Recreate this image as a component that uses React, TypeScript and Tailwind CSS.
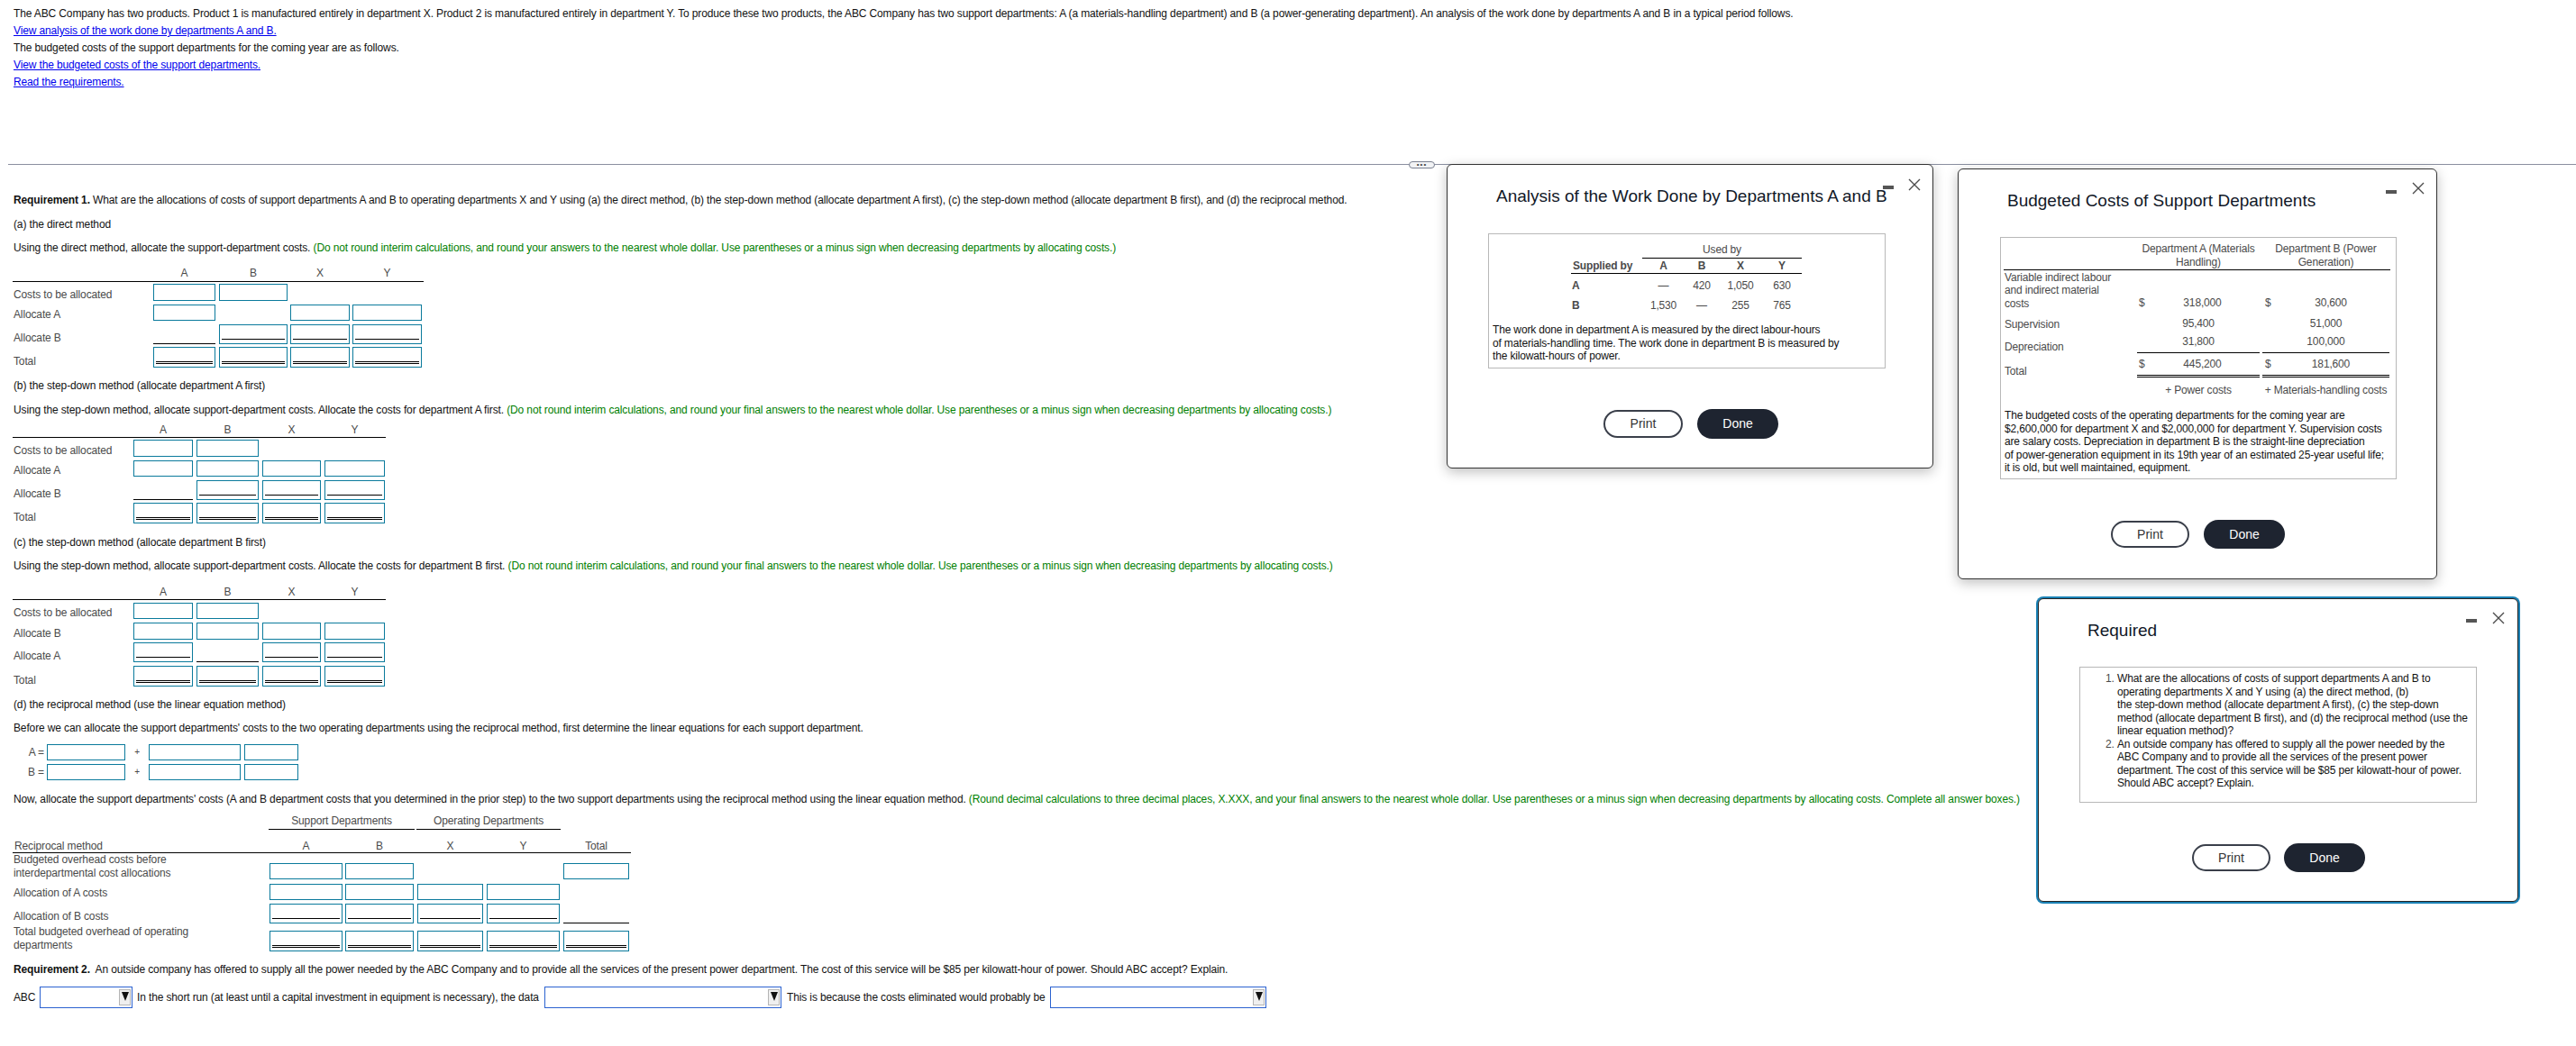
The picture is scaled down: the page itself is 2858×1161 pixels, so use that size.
import type { ReactNode } from 'react';

type CellKind = 'box' | 'single' | 'double' | 'line' | null;

interface TableRow {
  label: ReactNode;
  cells: CellKind[];
  height: string;
  gap: string;
}

const FONT = "font-['Liberation_Sans',Arial,sans-serif]";

function Cell({ kind, width }: { kind: CellKind; width: string }) {
  if (kind === null) return <div className={width} />;
  if (kind === 'line') return <div className={`${width} h-[19px] border-b border-black`} />;
  return (
    <div className={`${width} h-full border border-[#0a7a9c] bg-white ${kind === 'box' ? '' : 'px-[2px]'} ${kind === 'single' ? 'pb-[4px]' : ''} ${kind === 'double' ? 'pb-[3px]' : ''}`}>
      {kind === 'single' && <div className="h-full border-b border-black" />}
      {kind === 'double' && <div className="h-full border-b-[3px] border-double border-black" />}
    </div>
  );
}

function AllocTable(props: {
  grid: string;
  tableWidth: string;
  widths: string[];
  rows: TableRow[];
  headerClass: string;
  first: string;
}) {
  const { grid, tableWidth, widths, rows, headerClass, first } = props;
  return (
    <div className={`${tableWidth} text-[#4a4a4a]`}>
      <div className={`grid ${grid} border-b border-black ${headerClass}`}>
        <div />
        {['A', 'B', 'X', 'Y'].map((h, i) => (
          <div key={h} className={`${widths[i]} text-center leading-[14px]`}>{h}</div>
        ))}
      </div>
      <div className={first}>
        {rows.map((row, r) => (
          <div key={r} className={`grid ${grid} items-end ${row.height} ${row.gap}`}>
            <div className="pl-[1px] leading-[14px]">{row.label}</div>
            {row.cells.map((c, i) => (
              <div key={i} className="flex h-full items-end">
                <Cell kind={c} width={widths[i]} />
              </div>
            ))}
          </div>
        ))}
      </div>
    </div>
  );
}

function SelectBox({ width }: { width: string }) {
  return (
    <div className={`${width} flex h-[24px] shrink-0 items-center justify-end border border-[#2b62d0] bg-white pr-[1px]`}>
      <div className="flex h-[18px] w-[13px] items-start justify-center border border-[#b5b5b5] bg-[#efefef] pt-[2px]">
        <svg width="8" height="10" viewBox="0 0 8 10"><polygon points="0,0 8,0 4,10" fill="#111" /></svg>
      </div>
    </div>
  );
}

function WindowIcons({ minClass, closeClass }: { minClass: string; closeClass: string }) {
  return (
    <>
      <div className={`absolute h-[4px] w-[12px] bg-[#555] ${minClass}`} />
      <svg className={`absolute ${closeClass}`} width="14" height="14" viewBox="0 0 14 14">
        <path d="M1 1 L13 13 M13 1 L1 13" stroke="#4b4b4b" strokeWidth="1.4" fill="none" />
      </svg>
    </>
  );
}

function Buttons({ margin, printClass, doneClass, gap }: { margin: string; printClass: string; doneClass: string; gap: string }) {
  return (
    <div className={`flex items-center tracking-normal ${margin} ${gap}`}>
      <button className={`${printClass} rounded-full border-2 border-[#3a3f4a] bg-white text-[14px] text-[#333]`}>Print</button>
      <button className={`${doneClass} rounded-full bg-[#1e2430] text-[14px] text-white`}>Done</button>
    </div>
  );
}

const gridA = 'grid-cols-[156px_73px_79px_69px_79px]';
const widthsA = ['w-[69px]', 'w-[76px]', 'w-[66px]', 'w-[77px]'];
const gridB = 'grid-cols-[134px_70px_73px_69px_68px]';
const widthsB = ['w-[66px]', 'w-[69px]', 'w-[65px]', 'w-[67px]'];

const GREEN = 'text-[#008000]';

export default function App() {
  return (
    <div className={`relative h-[1161px] w-[2858px] overflow-hidden bg-white text-[12px] tracking-[-0.13px] text-[#111] ${FONT}`}>
      <div className="pl-[15px] pt-[6px] leading-[19px]">
        <p>The ABC Company has two products. Product 1 is manufactured entirely in department X. Product 2 is manufactured entirely in department Y. To produce these two products, the ABC Company has two support departments: A (a materials-handling department) and B (a power-generating department). An analysis of the work done by departments A and B in a typical period follows.</p>
        <p><a className="text-[#0000ee] underline">View analysis of the work done by departments A and B.</a></p>
        <p>The budgeted costs of the support departments for the coming year are as follows.</p>
        <p><a className="text-[#0000ee] underline">View the budgeted costs of the support departments.</a></p>
        <p><a className="text-[#0000ee] underline">Read the requirements.</a></p>
      </div>

      <div className="relative ml-[9px] mt-[81px] h-px bg-[#8a8fa0]">
        <div className="absolute left-[1554px] top-[-3px] flex h-[8px] w-[29px] items-center justify-center rounded-full border border-[#7a8090] bg-[#f2f3f5] text-[8px] leading-[4px] tracking-[1px] text-[#444]">•••</div>
      </div>

      <div className="pl-[14px] leading-[14px]">
        <p className="mt-[32px] pl-[1px]"><b>Requirement 1.</b> What are the allocations of costs of support departments A and B to operating departments X and Y using (a) the direct method, (b) the step-down method (allocate department A first), (c) the step-down method (allocate department B first), and (d) the reciprocal method.</p>
        <p className="mt-[13px] pl-[1px]">(a) the direct method</p>
        <p className="mb-[14px] mt-[12px] pl-[1px]">Using the direct method, allocate the support-department costs. <span className={GREEN}>(Do not round interim calculations, and round your answers to the nearest whole dollar. Use parentheses or a minus sign when decreasing departments by allocating costs.)</span></p>

        <AllocTable
          grid={gridA}
          tableWidth="w-[456px]"
          widths={widthsA}
          headerClass="pb-[2px]"
          first="mt-[2px]"
          rows={[
            { label: 'Costs to be allocated', cells: ['box', 'box', null, null], height: 'h-[19px]', gap: '' },
            { label: 'Allocate A', cells: ['box', null, 'box', 'box'], height: 'h-[18px]', gap: 'mt-[4px]' },
            { label: 'Allocate B', cells: ['line', 'single', 'single', 'single'], height: 'h-[22px]', gap: 'mt-[4px]' },
            { label: 'Total', cells: ['double', 'double', 'double', 'double'], height: 'h-[23px]', gap: 'mt-[3px]' },
          ]}
        />

        <p className="mt-[13px] pl-[1px]">(b) the step-down method (allocate department A first)</p>
        <p className="mb-[8px] mt-[13px] pl-[1px]">Using the step-down method, allocate support-department costs. Allocate the costs for department A first. <span className={GREEN}>(Do not round interim calculations, and round your final answers to the nearest whole dollar. Use parentheses or a minus sign when decreasing departments by allocating costs.)</span></p>

        <AllocTable
          grid={gridB}
          tableWidth="w-[414px]"
          widths={widthsB}
          headerClass="pb-[1px]"
          first="mt-[2px]"
          rows={[
            { label: 'Costs to be allocated', cells: ['box', 'box', null, null], height: 'h-[19px]', gap: '' },
            { label: 'Allocate A', cells: ['box', 'box', 'box', 'box'], height: 'h-[18px]', gap: 'mt-[4px]' },
            { label: 'Allocate B', cells: ['line', 'single', 'single', 'single'], height: 'h-[22px]', gap: 'mt-[4px]' },
            { label: 'Total', cells: ['double', 'double', 'double', 'double'], height: 'h-[23px]', gap: 'mt-[3px]' },
          ]}
        />

        <p className="mt-[14px] pl-[1px]">(c) the step-down method (allocate department B first)</p>
        <p className="mb-[15px] mt-[12px] pl-[1px]">Using the step-down method, allocate support-department costs. Allocate the costs for department B first. <span className={GREEN}>(Do not round interim calculations, and round your final answers to the nearest whole dollar. Use parentheses or a minus sign when decreasing departments by allocating costs.)</span></p>

        <AllocTable
          grid={gridB}
          tableWidth="w-[414px]"
          widths={widthsB}
          headerClass="pb-[1px]"
          first="mt-[3px]"
          rows={[
            { label: 'Costs to be allocated', cells: ['box', 'box', null, null], height: 'h-[18px]', gap: '' },
            { label: 'Allocate B', cells: ['box', 'box', 'box', 'box'], height: 'h-[19px]', gap: 'mt-[4px]' },
            { label: 'Allocate A', cells: ['single', 'line', 'single', 'single'], height: 'h-[22px]', gap: 'mt-[3px]' },
            { label: 'Total', cells: ['double', 'double', 'double', 'double'], height: 'h-[23px]', gap: 'mt-[4px]' },
          ]}
        />

        <p className="mt-[13px] pl-[1px]">(d) the reciprocal method (use the linear equation method)</p>
        <p className="mt-[12px] pl-[1px]">Before we can allocate the support departments' costs to the two operating departments using the reciprocal method, first determine the linear equations for each support department.</p>

        <div className="mt-[11px] text-[#4a4a4a]">
          {['A =', 'B ='].map((name, i) => (
            <div key={name} className={`flex h-[18px] items-center ${i === 1 ? 'mt-[4px]' : ''}`}>
              <span className="w-[36px] pr-[1px] text-right">{name}</span>
              <div className="ml-[2px] h-full w-[87px] border border-[#0a7a9c]" />
              <span className="w-[26px] text-center text-[10px]">+</span>
              <div className="h-full w-[102px] border border-[#0a7a9c]" />
              <div className="ml-[4px] h-full w-[60px] border border-[#0a7a9c]" />
            </div>
          ))}
        </div>

        <p className="mt-[14px] pl-[1px]">Now, allocate the support departments' costs (A and B department costs that you determined in the prior step) to the two support departments using the reciprocal method using the linear equation method. <span className={GREEN}>(Round decimal calculations to three decimal places, X.XXX, and your final answers to the nearest whole dollar. Use parentheses or a minus sign when decreasing departments by allocating costs. Complete all answer boxes.)</span></p>

        {/* Reciprocal method table */}
        <div className="mt-[10px] flex pl-[284px] text-[#4a4a4a]">
          <div className="w-[162px] border-b border-black pb-[2px] text-center">Support Departments</div>
          <div className="ml-[2px] w-[160px] border-b border-black pb-[2px] text-center">Operating Departments</div>
        </div>
        <div className="w-[686px] text-[#4a4a4a]">
          <div className="mt-[11px] grid grid-cols-[285px_84px_80px_77px_85px_75px] border-b border-black">
            <div className="pl-[2px]">Reciprocal method</div>
            <div className="w-[81px] text-center">A</div>
            <div className="w-[76px] text-center">B</div>
            <div className="w-[73px] text-center">X</div>
            <div className="w-[81px] text-center">Y</div>
            <div className="w-[73px] text-center">Total</div>
          </div>
          {[
            { label: <>Budgeted overhead costs before<br />interdepartmental cost allocations</>, cells: ['box', 'box', null, null, 'box'], h: 'h-[30px]', gap: '', inner: 'h-[18px] mb-[1px]' },
            { label: 'Allocation of A costs', cells: ['box', 'box', 'box', 'box', null], h: 'h-[18px]', gap: 'mt-[4px]', inner: 'h-[18px]' },
            { label: 'Allocation of B costs', cells: ['single', 'single', 'single', 'single', 'line'], h: 'h-[22px]', gap: 'mt-[4px]', inner: 'h-[22px]' },
            { label: <>Total budgeted overhead of operating<br />departments</>, cells: ['double', 'double', 'double', 'double', 'double'], h: 'h-[29px]', gap: 'mt-[2px]', inner: 'h-[23px] mb-[1px]' },
          ].map((row, r) => (
            <div key={r} className={`grid grid-cols-[285px_84px_80px_77px_85px_75px] items-end ${row.h} ${row.gap}`}>
              <div className="pl-[1px] leading-[15px]">{row.label}</div>
              {row.cells.map((c, i) => (
                <div key={i} className={`flex items-end ${row.inner}`}>
                  <Cell kind={c as CellKind} width={['w-[81px]', 'w-[76px]', 'w-[73px]', 'w-[81px]', 'w-[73px]'][i]} />
                </div>
              ))}
            </div>
          ))}
        </div>

        <p className="mt-[13px] pl-[1px]"><b>Requirement 2.</b>&nbsp; An outside company has offered to supply all the power needed by the ABC Company and to provide all the services of the present power department. The cost of this service will be $85 per kilowatt-hour of power. Should ABC accept? Explain.</p>
        <div className="mt-[12px] flex items-center pl-[1px]">
          <span className="w-[29px]">ABC</span>
          <SelectBox width="w-[103px]" />
          <span className="ml-[5px] w-[452px] whitespace-nowrap">In the short run (at least until a capital investment in equipment is necessary), the data</span>
          <SelectBox width="w-[263px]" />
          <span className="ml-[6px] w-[292px] whitespace-nowrap">This is because the costs eliminated would probably be</span>
          <SelectBox width="w-[240px]" />
        </div>
      </div>

      {/* Analysis window */}
      <div className="absolute left-[1605px] top-[182px] h-[338px] w-[540px] rounded-[6px] border border-[#333] bg-white tracking-[-0.16px] shadow-[0_4px_14px_rgba(0,0,0,0.25)]">
        <WindowIcons minClass="left-[483px] top-[23px]" closeClass="left-[511px] top-[15px]" />
        <h2 className="pl-[54px] pt-[23px] text-[19px] leading-[24px] tracking-normal text-[#111827]">Analysis of the Work Done by Departments A and B</h2>
        <div className="ml-[45px] mt-[29px] h-[150px] w-[441px] border border-[#b8b8b8] text-[#4a4a4a]">
          <div className="ml-[91px] w-[256px] pt-[10px]">
            <div className="ml-[79px] border-b border-black pb-[2px] text-center leading-[14px]">Used by</div>
            <div className="grid grid-cols-[79px_47px_38px_48px_44px] border-b border-black text-center leading-[16px]">
              <div className="pl-[2px] text-left font-bold">Supplied by</div>
              <div className="font-bold">A</div><div className="font-bold">B</div><div className="font-bold">X</div><div className="font-bold">Y</div>
            </div>
            <div className="mt-[2px] grid grid-cols-[79px_47px_38px_48px_44px] text-center leading-[22px]">
              <div className="pl-[1px] text-left font-bold">A</div><div>—</div><div>420</div><div>1,050</div><div>630</div>
              <div className="pl-[1px] text-left font-bold">B</div><div>1,530</div><div>—</div><div>255</div><div>765</div>
            </div>
          </div>
          <p className="mt-[9px] whitespace-nowrap pl-[4px] leading-[14.5px] text-[#111]">The work done in department A is measured by the direct labour-hours<br />of materials-handling time. The work done in department B is measured by<br />the kilowatt-hours of power.</p>
        </div>
        <Buttons margin="ml-[173px] mt-[45px]" gap="gap-[16px]" printClass="h-[31px] w-[88px]" doneClass="h-[33px] w-[90px]" />
      </div>

      {/* Budgeted costs window */}
      <div className="absolute left-[2172px] top-[187px] h-[456px] w-[532px] rounded-[6px] border border-[#333] bg-white tracking-[-0.16px] shadow-[0_4px_14px_rgba(0,0,0,0.25)]">
        <WindowIcons minClass="left-[474px] top-[23px]" closeClass="left-[503px] top-[14px]" />
        <h2 className="pl-[54px] pt-[23px] text-[19px] leading-[24px] tracking-normal text-[#111827]">Budgeted Costs of Support Departments</h2>
        <div className="ml-[46px] mt-[28px] h-[269px] w-[440px] border border-[#b8b8b8] text-[#4a4a4a]">
          <div className="ml-[3px] w-[429px] pt-[5px]">
            <div className="grid grid-cols-[148px_139px_142px] border-b border-black text-center leading-[15px]">
              <div />
              <div className="w-[136px]">Department A (Materials<br />Handling)</div>
              <div className="w-[141px]">Department B (Power<br />Generation)</div>
            </div>
            <div className="grid h-[44px] grid-cols-[148px_139px_142px] items-end">
              <div className="pl-[1px] leading-[14.5px]">Variable indirect labour<br />and indirect material<br />costs</div>
              <div className="flex w-[136px] pb-[1px] leading-[14px]"><span className="w-[9px] pl-[2px]">$</span><span className="flex-1 text-center">318,000</span></div>
              <div className="flex w-[141px] pb-[1px] leading-[14px]"><span className="w-[11px] pl-[3px]">$</span><span className="flex-1 text-center">30,600</span></div>
            </div>
            <div className="grid h-[24px] grid-cols-[148px_139px_142px] items-end leading-[14px]">
              <div className="pb-[1px] pl-[1px]">Supervision</div>
              <div className="w-[136px] pb-[2px] text-center">95,400</div>
              <div className="w-[141px] pb-[2px] text-center">51,000</div>
            </div>
            <div className="grid h-[22px] grid-cols-[148px_139px_142px]">
              <div className="pl-[1px] pt-[10px] leading-[14px]">Depreciation</div>
              <div className="w-[136px] border-b border-black pt-[4px] text-center leading-[14px]">31,800</div>
              <div className="w-[141px] border-b border-black pt-[4px] text-center leading-[14px]">100,000</div>
            </div>
            <div className="grid h-[26px] grid-cols-[148px_139px_142px]">
              <div className="pl-[1px] pt-[15px] leading-[14px]">Total</div>
              <div className="flex w-[136px] border-b-[3px] border-double border-black pt-[7px] leading-[14px]"><span className="w-[9px] pl-[2px]">$</span><span className="flex-1 text-center">445,200</span></div>
              <div className="flex w-[141px] border-b-[3px] border-double border-black pt-[7px] leading-[14px]"><span className="w-[11px] pl-[3px]">$</span><span className="flex-1 text-center">181,600</span></div>
            </div>
            <div className="mt-[10px] grid grid-cols-[148px_139px_142px] leading-[14px]">
              <div />
              <div className="w-[136px] text-center">+ Power costs</div>
              <div className="w-[141px] text-center">+ Materials-handling costs</div>
            </div>
            <p className="mt-[14px] whitespace-nowrap pl-[1px] leading-[14.5px] text-[#111]">The budgeted costs of the operating departments for the coming year are<br />$2,600,000 for department X and $2,000,000 for department Y. Supervision costs<br />are salary costs. Depreciation in department B is the straight-line depreciation<br />of power-generation equipment in its 19th year of an estimated 25-year useful life;<br />it is old, but well maintained, equipment.</p>
          </div>
        </div>
        <Buttons margin="ml-[169px] mt-[45px]" gap="gap-[16px]" printClass="h-[30px] w-[87px]" doneClass="h-[32px] w-[90px]" />
      </div>

      {/* Requirements window */}
      <div className="absolute left-[2261px] top-[664px] h-[337px] w-[533px] rounded-[6px] border border-[#222] bg-white tracking-[-0.16px] shadow-[0_0_0_2px_#1b82b6]">
        <WindowIcons minClass="left-[474px] top-[22px]" closeClass="left-[503px] top-[14px]" />
        <h2 className="pl-[54px] pt-[23px] text-[19px] leading-[24px] tracking-normal text-[#111827]">Required</h2>
        <div className="ml-[45px] mt-[28px] h-[151px] w-[441px] whitespace-nowrap border border-[#b8b8b8] pt-[5px] leading-[14.5px]">
          <div className="flex pl-[28px]">
            <span className="w-[13px] text-[#4a4a4a]">1.</span>
            <p>What are the allocations of costs of support departments A and B to<br />operating departments X and Y using (a) the direct method, (b)<br />the step-down method (allocate department A first), (c) the step-down<br />method (allocate department B first), and (d) the reciprocal method (use the<br />linear equation method)?</p>
          </div>
          <div className="flex pl-[28px]">
            <span className="w-[13px] text-[#4a4a4a]">2.</span>
            <p>An outside company has offered to supply all the power needed by the<br />ABC Company and to provide all the services of the present power<br />department. The cost of this service will be $85 per kilowatt-hour of power.<br />Should ABC accept? Explain.</p>
          </div>
        </div>
        <Buttons margin="ml-[170px] mt-[45px]" gap="gap-[15px]" printClass="h-[30px] w-[87px]" doneClass="h-[32px] w-[90px]" />
      </div>
    </div>
  );
}
